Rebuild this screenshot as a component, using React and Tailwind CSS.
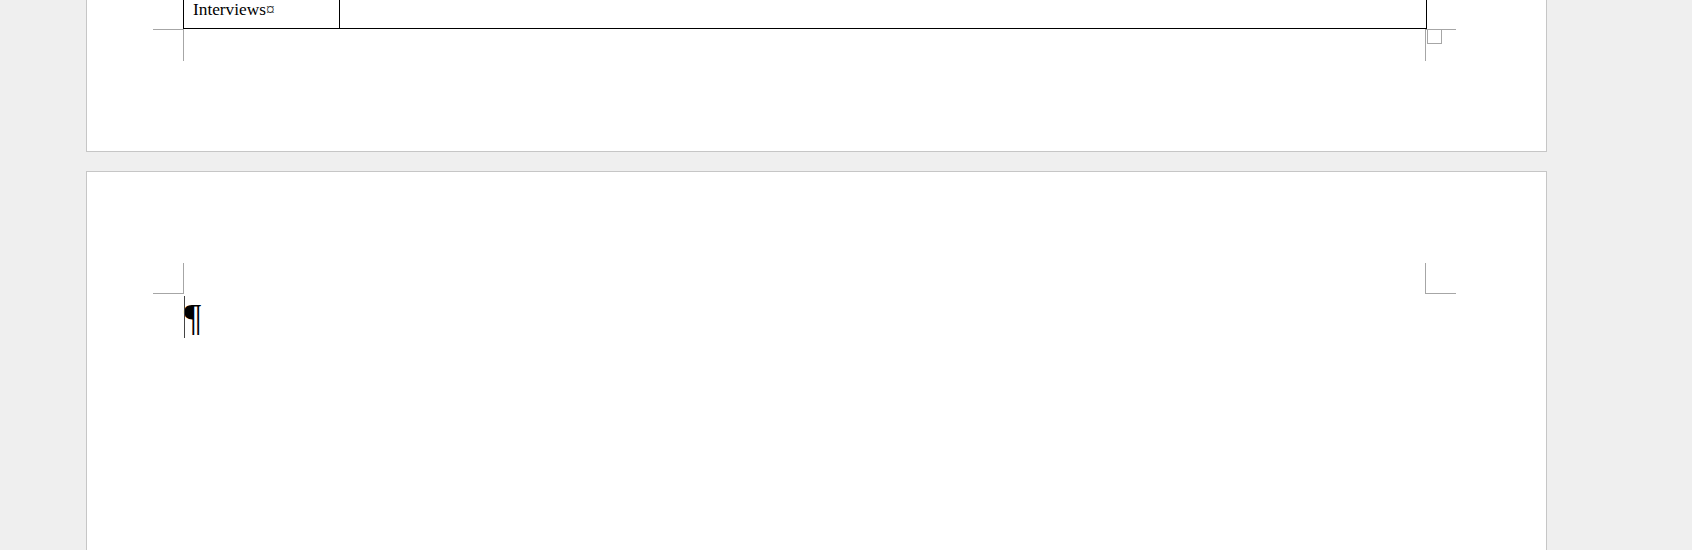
const serif = { fontFamily: '"Liberation Serif", "Times New Roman", serif' };

export default function App() {
  return (
    <div className="w-[1692px] h-[550px] overflow-hidden bg-[#efefef] pl-[86px]" style={serif}>
      <div className="flex w-[1461px] flex-col gap-[19px]">
        {/* end of page 1 */}
        <div className="h-[152px] border-x border-b border-[#c6c6c6] bg-white pl-[66px]">
          <div className="ml-[30px] flex h-[29px] w-[1244px] border-x border-b border-black">
            <div className="flex w-[156px] items-end border-r border-black pb-[9px] pl-[9px]">
              <span className="text-[17.3px] leading-[19px] text-black">
                Interviews<span className="text-[#333]">¤</span>
              </span>
            </div>
            <div className="flex-1" />
          </div>
          {/* crop marks under the table */}
          <div className="flex w-[1303px] justify-between">
            <div className="h-[32px] w-[31px] border-r border-t border-[#a6a6a6]" />
            <div className="h-[32px] w-[31px] border-l border-t border-[#a6a6a6] pl-px">
              <div className="h-[14px] w-[15px] border-x border-b border-[#a6a6a6]" />
            </div>
          </div>
        </div>

        {/* page 2 */}
        <div className="h-[420px] border border-[#c6c6c6] bg-white pl-[66px] pt-[91px]">
          <div className="flex w-[1303px] justify-between">
            <div className="h-[31px] w-[31px] border-b border-r border-[#a6a6a6]" />
            <div className="h-[31px] w-[31px] border-b border-l border-[#a6a6a6]" />
          </div>
          <div className="relative ml-[31px] mt-[2px] w-fit">
            <p className="text-[38px] leading-[42px] text-black">¶</p>
            {/* text caret */}
            <div className="absolute left-0 top-0 h-[42px] w-px bg-[#444]" />
          </div>
        </div>
      </div>
    </div>
  );
}
